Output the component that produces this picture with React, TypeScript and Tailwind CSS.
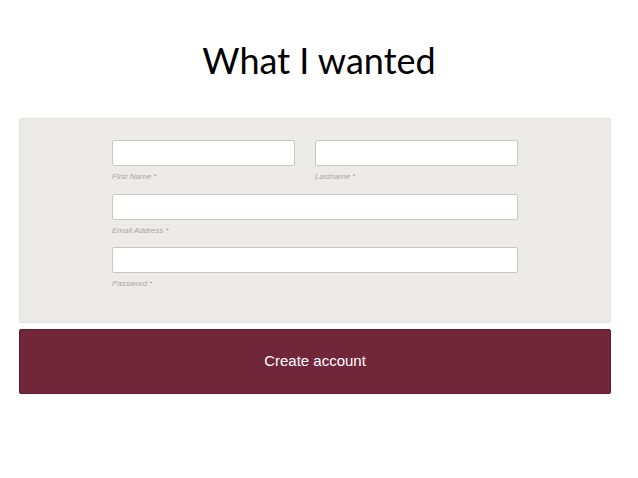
export default function App() {
  return (
    <div className="w-[638px] h-[478px] bg-white">
      <h1 className="pt-[38px] h-[118px] text-center text-[36px] leading-[44px] text-black font-['Lato',sans-serif]">
        What I wanted
      </h1>

      <div className="mx-[19px] w-[592px] bg-[#ecebe9] border border-[#e4e3e0] rounded-[2px] pl-[92px] pt-[21px] pb-[33px]">
        <div className="flex gap-[20px] w-[406px]">
          <Field label="First Name *" width="w-[183px]" />
          <Field label="Lastname *" width="w-[203px]" />
        </div>
        <div className="mt-[12px]">
          <Field label="Email Address *" width="w-[406px]" />
        </div>
        <div className="mt-[11px]">
          <Field label="Password *" width="w-[406px]" />
        </div>
      </div>

      <button className="mt-[6px] mx-[19px] w-[592px] h-[65px] bg-[#722639] border border-[#5e1d2e] rounded-[2px] text-white text-[15px] font-['Liberation_Sans',sans-serif]">
        Create account
      </button>
    </div>
  );
}

function Field({ label, width }: { label: string; width: string }) {
  return (
    <div className={width}>
      <input
        type="text"
        className="block w-full h-[26px] bg-white border border-[#c9c6c1] rounded-[2px] outline-none"
      />
      <div className="mt-[6px] h-[10px] text-[8px] leading-[10px] italic text-[#a9a7a3] font-['Liberation_Sans',sans-serif]">
        {label}
      </div>
    </div>
  );
}
